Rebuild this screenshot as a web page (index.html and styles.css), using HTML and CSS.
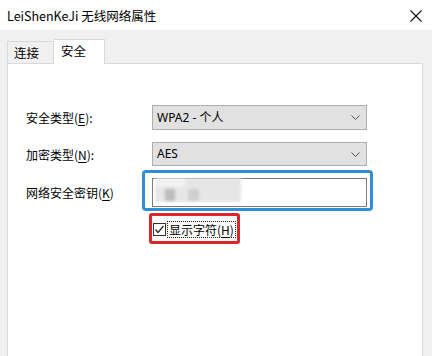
FILE: index.html
```html
<!DOCTYPE html>
<html lang="zh">
<head>
<meta charset="utf-8">
<link rel="stylesheet" href="styles.css">
</head>
<body>
<div class="titlebar">
  <span class="title">LeiShenKeJi 无线网络属性</span>
  <svg class="close" width="12" height="12" viewBox="0 0 12 12"><path d="M0.5 0.5L11.5 11.5M11.5 0.5L0.5 11.5" stroke="#111" stroke-width="1.1" fill="none"/></svg>
</div>
<div class="main">
  <div class="tabs">
    <div class="tab">连接</div>
    <div class="tab active">安全</div>
  </div>
  <div class="panel">
    <div class="form">
      <div class="lbl">安全类型(<u>E</u>):</div>
      <div class="select"><span>WPA2 - 个人</span><svg width="9" height="5" viewBox="0 0 9 5"><path d="M0.5 0.5L4.5 4.5L8.5 0.5" stroke="#555" fill="none"/></svg></div>
      <div class="lbl">加密类型(<u>N</u>):</div>
      <div class="select"><span>AES</span><svg width="9" height="5" viewBox="0 0 9 5"><path d="M0.5 0.5L4.5 4.5L8.5 0.5" stroke="#555" fill="none"/></svg></div>
      <div class="lbl">网络安全密钥(<u>K</u>)</div>
      <div class="input">
        <div class="blur">
          <span class="b1"></span><span class="b2"></span><span class="b3"></span><span class="b4"></span>
        </div>
        <div class="hl-blue"></div>
      </div>
      <div class="check-row">
        <span class="box"><svg width="11" height="11" viewBox="0 0 11 11"><path d="M1.5 5.5L4 8.5L9.5 2" stroke="#222" stroke-width="1.2" fill="none"/></svg></span>
        <span class="check-text">显示字符(<u>H</u>)</span>
        <div class="hl-red"></div>
      </div>
    </div>
  </div>
</div>
</body>
</html>
```
FILE: styles.css
```css
html, body {
  margin: 0;
  padding: 0;
}
body {
  width: 432px;
  height: 356px;
  overflow: hidden;
  background: #f0f0f0;
  font-family: "Noto Sans", "Noto Sans CJK SC", sans-serif;
  font-size: 12px;
  color: #000;
}
.titlebar {
  height: 30px;
  background: #fff;
  display: flex;
  align-items: center;
  justify-content: space-between;
  padding: 0 10px 0 7px;
  box-sizing: border-box;
}
.title {
  font-size: 12.5px;
  font-family: "Noto Sans CJK SC", sans-serif;
}
.close {
  display: block;
  margin-top: 1px;
}
.main {
  padding: 9px 9px 0 7px;
}
.tabs {
  display: flex;
  align-items: flex-end;
  height: 24px;
}
.tab {
  box-sizing: border-box;
  width: 47px;
  height: 22px;
  border: 1px solid #d9d9d9;
  border-bottom: none;
  padding-left: 6px;
  line-height: 21px;
  font-family: "Noto Sans CJK SC", sans-serif;
  font-size: 12.5px;
}
.tab.active {
  width: 51px;
  height: 25px;
  background: #fff;
  padding-left: 7px;
  margin-bottom: -1px;
  position: relative;
  z-index: 1;
  line-height: 22px;
  border-left: none;
}
.panel {
  background: #fff;
  border: 1px solid #d9d9d9;
  height: 300px;
  padding: 41px 0 0 18px;
  box-sizing: border-box;
}
.form {
  display: grid;
  grid-template-columns: 126px 215px;
  grid-template-rows: 25px 24px 29px 20px;
  row-gap: 12px;
  align-items: center;
}
.lbl {
  font-family: "Noto Sans CJK SC", sans-serif;
}
.lbl u, .check-text u {
  text-decoration-thickness: 1px;
  text-underline-offset: 2px;
}
.select {
  height: 100%;
  box-sizing: border-box;
  background: #e1e1e1;
  border: 1px solid #adadad;
  display: flex;
  align-items: center;
  justify-content: space-between;
  padding: 0 6px 0 4px;
  font-family: "Noto Sans", "Noto Sans CJK SC", sans-serif;
}
.select span {
  margin-top: -1px;
}
.input {
  height: 100%;
  box-sizing: border-box;
  background: #fff;
  border: 1px solid #7a7a7a;
  position: relative;
}
.blur {
  position: absolute;
  left: 2px;
  top: -1px;
  width: 86px;
  height: 24px;
  filter: blur(1.5px);
}
.blur span {
  position: absolute;
  display: block;
}
.blur .b1 {
  left: 0;
  top: 0;
  width: 86px;
  height: 24px;
  background: #e6e6e6;
}
.blur .b2 {
  left: 10px;
  top: 11px;
  width: 10px;
  height: 12px;
  background: #bcbcbc;
}
.blur .b3 {
  left: 33px;
  top: 11px;
  width: 11px;
  height: 12px;
  background: #cfcfcf;
}
.blur .b4 {
  left: 0;
  top: 0;
  width: 30px;
  height: 9px;
  background: #f2f2f2;
}
.hl-blue {
  position: absolute;
  left: -11px;
  right: -7px;
  top: -9px;
  bottom: -5px;
  border: 3px solid #2f8fd5;
  border-radius: 4px;
}
.check-row {
  grid-column: 2;
  display: inline-flex;
  align-items: center;
  justify-self: start;
  position: relative;
  height: 20px;
}
.box {
  box-sizing: border-box;
  width: 13px;
  height: 13px;
  border: 1px solid #333;
  margin-left: 1px;
  margin-right: 1px;
  display: flex;
  align-items: center;
  justify-content: center;
  background: #fff;
}
.box svg {
  display: block;
}
.check-text {
  border: 1px dotted #222;
  padding: 0 1px;
  line-height: 15px;
  font-family: "Noto Sans CJK SC", sans-serif;
}
.hl-red {
  position: absolute;
  left: -3px;
  right: -4px;
  top: -6px;
  bottom: -5px;
  border: 3px solid #dc2529;
  border-radius: 3px;
}
```
